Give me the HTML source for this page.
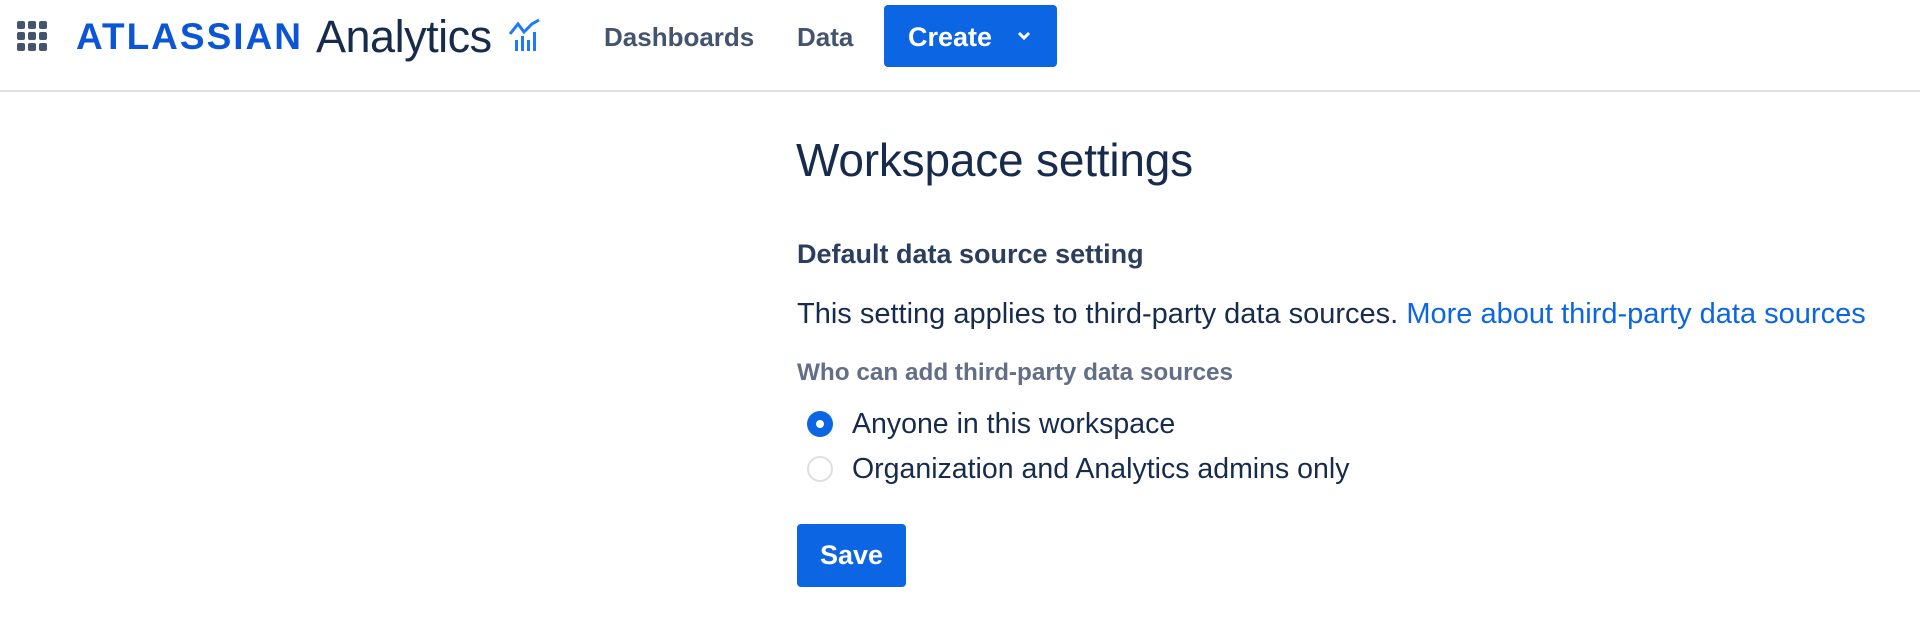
<!DOCTYPE html>
<html><head><meta charset="utf-8"><style>
body{margin:0;width:1920px;height:628px;background:#fff;font-family:"Liberation Sans",sans-serif;color:#172b4d;position:relative;overflow:hidden}
.a{position:absolute;white-space:nowrap}
.hdr{position:absolute;left:0;top:0;width:1920px;height:90px;border-bottom:2px solid #dcdfe4}
.dot{position:absolute;width:8px;height:8px;border-radius:2px;background:#44546f}
</style></head><body>
<div class="hdr"></div>
<div class="a" style="left:17px;top:21px;width:32px;height:32px">
<div class="dot" style="left:0;top:0"></div><div class="dot" style="left:11px;top:0"></div><div class="dot" style="left:22px;top:0"></div>
<div class="dot" style="left:0;top:11px"></div><div class="dot" style="left:11px;top:11px"></div><div class="dot" style="left:22px;top:11px"></div>
<div class="dot" style="left:0;top:22px"></div><div class="dot" style="left:11px;top:22px"></div><div class="dot" style="left:22px;top:22px"></div>
</div>
<div class="a" style="left:76px;top:16px;font-size:37px;font-weight:bold;color:#0c55d4;letter-spacing:2px;line-height:42px">ATLASSIAN</div>
<div class="a" style="left:316px;top:12px;font-size:45px;color:#172b4d;line-height:50px;letter-spacing:-0.5px">Analytics</div>
<svg class="a" style="left:508px;top:18px" width="34" height="34" viewBox="0 0 34 34">
<polyline points="2,16 10,6 16,14 24,6 31,2" fill="none" stroke="#1d7afc" stroke-width="3"/>
<rect x="7" y="22" width="3" height="11" fill="#1d7afc"/><rect x="13" y="18" width="3" height="15" fill="#1d7afc"/><rect x="19" y="22" width="3" height="11" fill="#1d7afc"/><rect x="25" y="14" width="3" height="19" fill="#1d7afc"/>
</svg>
<div class="a" style="left:604px;top:21px;font-size:26px;font-weight:bold;color:#44546f;line-height:32px">Dashboards</div>
<div class="a" style="left:797px;top:21px;font-size:26px;font-weight:bold;color:#44546f;line-height:32px">Data</div>
<div class="a" style="left:884px;top:5px;width:173px;height:62px;background:#0c66e4;border-radius:4px"></div>
<div class="a" style="left:908px;top:21px;font-size:27px;font-weight:bold;color:#fff;line-height:32px">Create</div>
<svg class="a" style="left:1016px;top:29px" width="16" height="14" viewBox="0 0 16 14"><polyline points="3,4 8,9 13,4" fill="none" stroke="#fff" stroke-width="3"/></svg>

<div class="a" style="left:796px;top:132px;font-size:46px;font-weight:500;color:#172b4d;line-height:56px;letter-spacing:-0.2px">Workspace settings</div>
<div class="a" style="left:797px;top:238px;font-size:27px;font-weight:bold;color:#2c3e5d;line-height:32px">Default data source setting</div>
<div class="a" style="left:797px;top:296px;font-size:29px;color:#172b4d;line-height:36px">This setting applies to third-party data sources. <span style="color:#0c66e4">More about third-party data sources</span></div>
<div class="a" style="left:797px;top:358px;font-size:24.3px;font-weight:bold;color:#626f86;line-height:30px">Who can add third-party data sources</div>
<div class="a" style="left:807px;top:411px;width:26px;height:26px;border-radius:50%;background:#0c66e4"></div>
<div class="a" style="left:816px;top:420px;width:8px;height:8px;border-radius:50%;background:#fff"></div>
<div class="a" style="left:852px;top:406px;font-size:28.5px;line-height:36px">Anyone in this workspace</div>
<div class="a" style="left:807px;top:456px;width:22px;height:22px;border-radius:50%;border:2px solid #dcdfe4"></div>
<div class="a" style="left:852px;top:451px;font-size:28.5px;line-height:36px">Organization and Analytics admins only</div>
<div class="a" style="left:797px;top:524px;width:109px;height:63px;background:#0c66e4;border-radius:4px"></div>
<div class="a" style="left:797px;top:539px;width:109px;text-align:center;font-size:27px;font-weight:bold;color:#fff;line-height:32px">Save</div>
</body></html>
